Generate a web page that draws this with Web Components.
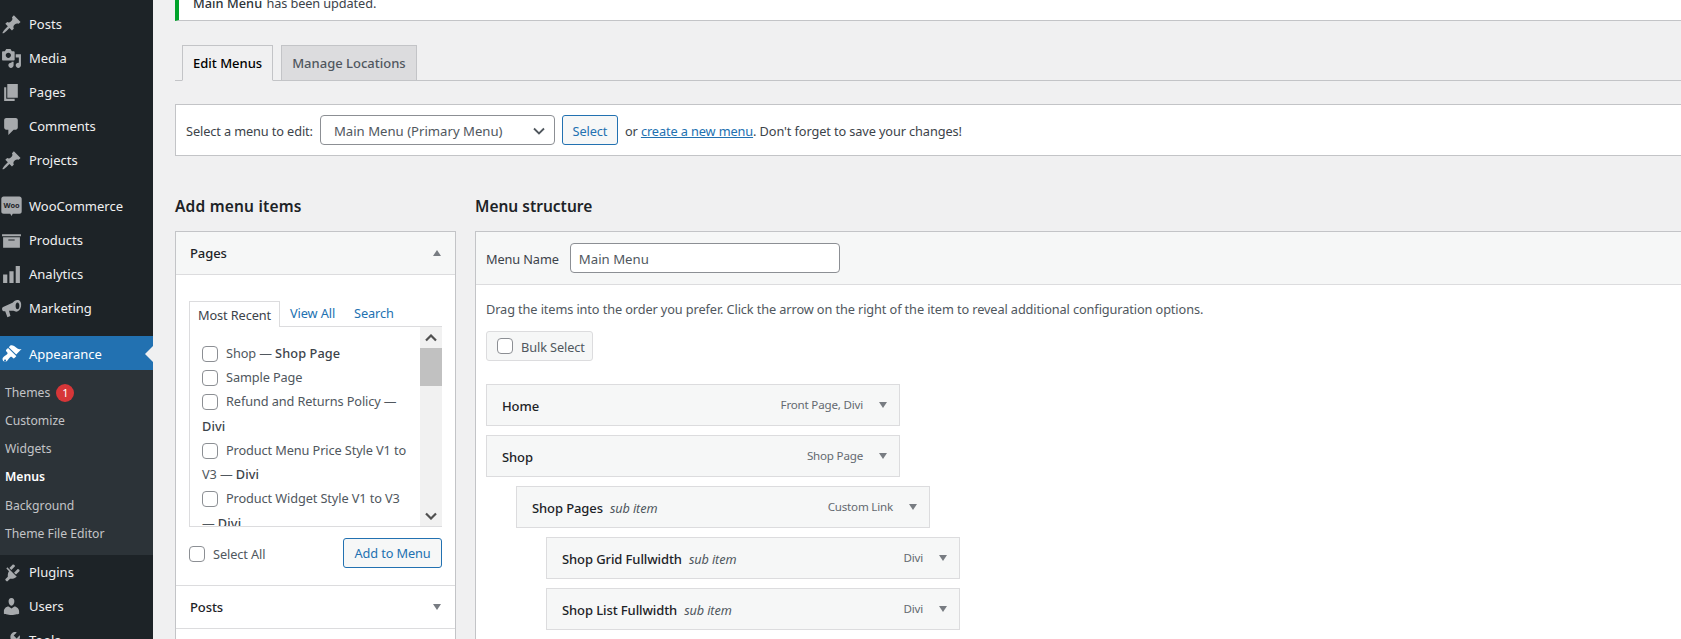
<!DOCTYPE html>
<html lang="en">
<head>
<meta charset="utf-8">
<title>Menus</title>
<style>
    html, body { margin: 0; height: 639px; overflow: hidden; background: #f0f0f1; }
    body { display: flex; font: 13px/20px "Noto Sans", "Open Sans", sans-serif; color: #3c434a; }
    strong { font-weight: 500; color: #2c3338; }
    wp-notice strong { letter-spacing: .05px; margin-right: 1px; }
    wp-check-item strong { color: #3c434a; letter-spacing: .1px; }
</style>
</head>
<body>

<wp-sidebar>
    <wp-nav-item icon="post" style="margin-top:7px">Posts</wp-nav-item>
    <wp-nav-item icon="media">Media</wp-nav-item>
    <wp-nav-item icon="page">Pages</wp-nav-item>
    <wp-nav-item icon="comments">Comments</wp-nav-item>
    <wp-nav-item icon="post">Projects</wp-nav-item>
    <wp-nav-item icon="woo" style="margin-top:12px">WooCommerce</wp-nav-item>
    <wp-nav-item icon="archive">Products</wp-nav-item>
    <wp-nav-item icon="chart">Analytics</wp-nav-item>
    <wp-nav-item icon="megaphone">Marketing</wp-nav-item>
    <wp-nav-item icon="appearance" current style="margin-top:11px">Appearance</wp-nav-item>
    <wp-subnav>
        <wp-subnav-item>Themes <wp-badge>1</wp-badge></wp-subnav-item>
        <wp-subnav-item>Customize</wp-subnav-item>
        <wp-subnav-item>Widgets</wp-subnav-item>
        <wp-subnav-item current>Menus</wp-subnav-item>
        <wp-subnav-item>Background</wp-subnav-item>
        <wp-subnav-item>Theme File Editor</wp-subnav-item>
    </wp-subnav>
    <wp-nav-item icon="plugins">Plugins</wp-nav-item>
    <wp-nav-item icon="users">Users</wp-nav-item>
    <wp-nav-item icon="tools">Tools</wp-nav-item>
</wp-sidebar>

<wp-main>
    <wp-notice><strong>Main Menu</strong> has been updated.</wp-notice>
    <wp-tabs>
        <wp-tab active>Edit Menus</wp-tab>
        <wp-tab>Manage Locations</wp-tab>
    </wp-tabs>
    <wp-manage-bar></wp-manage-bar>

    <wp-columns>
        <wp-add-items slot="left">
            <wp-check-item>Shop — <strong>Shop Page</strong></wp-check-item>
            <wp-check-item>Sample Page</wp-check-item>
            <wp-check-item>Refund and Returns Policy —<br><strong>Divi</strong></wp-check-item>
            <wp-check-item>Product Menu Price Style V1 to<br>V3 — <strong>Divi</strong></wp-check-item>
            <wp-check-item>Product Widget Style V1 to V3<br>— <strong>Divi</strong></wp-check-item>
        </wp-add-items>

        <wp-structure slot="right">
            <wp-menu-row type="Front Page, Divi">Home</wp-menu-row>
            <wp-menu-row type="Shop Page">Shop</wp-menu-row>
            <wp-menu-row type="Custom Link" depth="1" sub>Shop Pages</wp-menu-row>
            <wp-menu-row type="Divi" depth="2" sub>Shop Grid Fullwidth</wp-menu-row>
            <wp-menu-row type="Divi" depth="2" sub>Shop List Fullwidth</wp-menu-row>
        </wp-structure>
    </wp-columns>
</wp-main>

<script>
    const ICONS = {
        post: 'M10.44 3.02l1.82-1.82 6.36 6.35-1.83 1.82c-1.05-.68-2.48-.57-3.41.36l-.75.75c-.92.93-1.04 2.35-.35 3.41l-1.83 1.82-2.41-2.41-2.8 2.79c-.42.42-3.38 2.71-3.8 2.29s1.86-3.39 2.28-3.81l2.79-2.79L4.1 9.36l1.83-1.82c1.05.69 2.48.57 3.4-.36l.75-.75c.93-.92 1.05-2.35.36-3.41z',
        media: 'M13 11V4c0-.55-.45-1-1-1h-1.67L9 1H5L3.67 3H2c-.55 0-1 .45-1 1v7c0 .55.45 1 1 1h10c.55 0 1-.45 1-1zM7 4.5c1.38 0 2.5 1.12 2.5 2.5S8.38 9.5 7 9.5 4.5 8.38 4.5 7 5.62 4.5 7 4.5zM14 6h5v10.5c0 1.38-1.12 2.5-2.5 2.5S14 17.88 14 16.5s1.12-2.5 2.5-2.5c.17 0 .34.02.5.05V9h-3V6zm-4 8.05V13h2v3.5c0 1.38-1.12 2.5-2.5 2.5S7 17.88 7 16.5 8.12 14 9.5 14c.17 0 .34.02.5.05z',
        page: 'M6 15V2h10v13H6zm-1 1h8v2H3V5h2v11z',
        comments: 'M5 2h9c1.1 0 2 .9 2 2v7c0 1.1-.9 2-2 2h-2l-5 5v-5H5c-1.1 0-2-.9-2-2V4c0-1.1.9-2 2-2z',
        archive: 'M19 4v2H1V4h18zM2 7h16v10H2V7zm11 3V9H7v1h6z',
        chart: 'M18 18V2h-4v16h4zm-6 0V7H8v11h4zm-6 0v-8H2v8h4z',
        megaphone: 'M2 8.5L11 4.6C12.4 2.6 14.9 1.4 16.6 2c2 .6 3 3.1 2.5 6-.5 2.9-2.6 5-4.6 5l-2.6-.8-4.3-.1 1.4 5-2.9 1.3L4 12.5H2.6C1.6 12.5 1 11.5 1 10.5S1.5 8.5 2 8.5zM15.7 4.4c-1 0-1.8 1.4-1.8 3.2s.8 3.2 1.8 3.2 1.8-1.4 1.8-3.2-.8-3.2-1.8-3.2z',
        appearance: 'M14.48 11.06L7.41 3.99l1.5-1.5c.5-.56 2.3-.47 3.51.32 1.21.8 1.43 1.28 2.91 2.1 1.18.64 2.45 1.26 4.23.91zm-.71.71L6.7 4.7 4.93 6.47c-.39.39-.39 1.02 0 1.41l1.06 1.06c.39.39.39 1.03 0 1.42-.6.6-1.43 1.27-2.21 1.9-.64.51-1.22.97-1.6 1.35-.97.97-.97 2.54 0 3.51.97.97 2.54.97 3.51 0 .38-.38.84-.96 1.35-1.6.63-.78 1.3-1.61 1.9-2.21.39-.39 1.03-.39 1.42 0l1.06 1.06c.39.39 1.02.39 1.41 0l1.77-1.77zm-9.19 5.66c-.39.39-1.02.39-1.41 0-.39-.39-.39-1.03 0-1.42.39-.39 1.02-.39 1.41 0 .39.39.39 1.03 0 1.42z',
        plugins: 'M13.11 4.36L9.87 7.6 8 5.73l3.24-3.24c.35-.34 1.05-.2 1.56.32.52.51.66 1.21.31 1.55zm4.41 4.41l-3.24 3.24-1.88-1.88 3.24-3.24c.35-.34 1.05-.2 1.56.32.52.51.66 1.21.32 1.56zM5.1 6.13l.91-1.12 9.01 9.01-1.19.84c-.71.71-2.63 1.16-3.67 1.16H8.64l-2.19 2.18c-.39.39-1.02.39-1.41 0l-.71-.71c-.39-.39-.39-1.02 0-1.41l2.15-2.15v-1.53c0-1.03.45-2.95 1.16-3.67z',
        users: 'M10 9.25c-2.27 0-2.73-3.44-2.73-3.44C7 4.02 7.82 2 9.97 2c2.16 0 2.98 2.02 2.71 3.81 0 0-.41 3.44-2.68 3.44zm0 2.57L12.72 10c2.39 0 4.52 2.33 4.52 4.53v2.49s-3.65 1.13-7.24 1.13c-3.65 0-7.24-1.13-7.24-1.13v-2.49c0-2.25 1.94-4.48 4.47-4.48z',
        tools: 'M16.68 9.77c-1.34 1.34-3.3 1.67-4.95.99l-5.41 6.52c-.99.99-2.59.99-3.57 0-.99-.98-.99-2.58 0-3.57l6.52-5.42c-.68-1.65-.35-3.61.99-4.95 1.28-1.28 3.12-1.62 4.72-1.06l-2.89 2.89 2.82 2.82 2.89-2.89c.56 1.6.22 3.44-1.06 4.72zM3.81 16.21c.4.39 1.03.39 1.42 0 .4-.4.4-1.03 0-1.43-.39-.39-1.02-.39-1.42 0-.39.4-.39 1.03 0 1.43z'
    };

    // every element is the same thing: a style, some markup, an open shadow root
    function define(name, css, html) {
        customElements.define(
            name,
            class extends HTMLElement {
                connectedCallback() {
                    if (this.shadowRoot) return;
                    const markup = typeof html === 'function' ? html(this) : html;
                    this.attachShadow({ mode: 'open' }).innerHTML = `<style>${css}</style>${markup}`;
                }
            }
        );
    }

    const triangle = (up) => `<svg width="8" height="6" viewBox="0 0 8 6"><path fill="#787c82" d="${up ? 'M4 0l4 6H0z' : 'M0 0h8L4 6z'}"/></svg>`;

    define('wp-sidebar', `
        :host { display: block; flex: none; width: 153px; height: 639px; overflow: hidden; background: #1d2327; }
    `, `<slot></slot>`);

    define('wp-nav-item', `
        :host { display: flex; align-items: center; height: 34px; position: relative; color: #f0f0f1; font-size: 13px; }
        :host([current]) { background: #2271b1; color: #fff; }
        svg { flex: none; width: 21px; height: 21px; margin: 0 7px 0 1px; fill: #a7aaad; }
        :host([current]) svg { fill: #fff; }
        :host([current]) span.label { padding-top: 2px; }
        .arrow { position: absolute; right: 0; top: 10px; width: 8px; height: 16px; background: #f0f0f1; clip-path: polygon(100% 0, 100% 100%, 0 50%); }
    `, (host) => {
        const name = host.getAttribute('icon');
        const icon = name === 'woo'
            ? `<svg viewBox="0 0 20 20" style="margin-top:1px"><path d="M2.5 .5h15c1.3 0 2.2 1 2.2 2.2v12c0 1.2-.9 2.2-2.2 2.2h-6.3l-1.2 2.1-1.2-2.1H2.5c-1.3 0-2.2-1-2.2-2.2v-12C.3 1.5 1.2.5 2.5.5z"/><text x="10" y="11.5" text-anchor="middle" font-size="7" font-weight="700" fill="#1d2327" font-family="Noto Sans">Woo</text></svg>`
            : `<svg viewBox="0 0 20 20"><path fill-rule="evenodd" d="${ICONS[name]}"/></svg>`;
        return `${icon}<span class="label"><slot></slot></span>${host.hasAttribute('current') ? '<span class="arrow"></span>' : ''}`;
    });

    define('wp-subnav', `
        :host { display: block; background: #2c3338; padding: 8.7px 0 6px; height: 185px; box-sizing: border-box; }
    `, `<slot></slot>`);

    define('wp-subnav-item', `
        :host { display: flex; align-items: center; gap: 3px; height: 28.2px; padding-left: 5px; color: #c3c4c7; font-size: 12.2px; white-space: pre; }
        :host([current]) { color: #fff; font-weight: 600; }
    `, `<slot></slot>`);

    define('wp-badge', `
        :host { display: inline-flex; align-items: center; justify-content: center; width: 18px; height: 18px; border-radius: 50%; background: #d63638; color: #fff; font-size: 11px; }
    `, `<slot></slot>`);

    define('wp-main', `
        :host { display: block; flex: 1; min-width: 0; padding-left: 22px; font-size: 12.75px; letter-spacing: -.11px; }
    `, `<slot></slot>`);

    define('wp-notice', `
        :host { display: flex; align-items: flex-end; height: 21px; box-sizing: border-box; overflow: hidden; padding: 0 0 7px 14px; background: #fff; border-left: 4px solid #00a32a; border-bottom: 1px solid #c3c4c7; white-space: nowrap; }
    `, `<span><slot></slot></span>`);

    define('wp-tabs', `
        :host { display: flex; gap: 8px; margin-top: 24px; height: 36px; box-sizing: border-box; padding-left: 7px; border-bottom: 1px solid #c3c4c7; }
    `, `<slot></slot>`);

    define('wp-tab', `
        :host { display: flex; align-items: center; height: 36px; box-sizing: border-box; padding: 0 10px; border: 1px solid #c3c4c7; background: #dcdcde; color: #50575e; font-weight: 500; font-size: 13px; letter-spacing: 0; }
        :host([active]) { background: #f0f0f1; color: #000; border-bottom-color: #f0f0f1; }
    `, `<slot></slot>`);

    define('wp-manage-bar', `
        :host { display: flex; align-items: center; margin-top: 23px; height: 52px; box-sizing: border-box; padding-left: 10px; background: #fff; border: 1px solid #c3c4c7; border-right: 0; white-space: pre; }
        .text { padding-top: 2px; }
        .select { display: flex; align-items: center; justify-content: space-between; box-sizing: border-box; width: 235px; height: 30px; margin-left: 7px; padding: 1px 9px 0 13px; border: 1px solid #8c8f94; border-radius: 4px; color: #50575e; font-size: 13.15px; letter-spacing: 0; }
        .button { display: flex; align-items: center; box-sizing: border-box; height: 30px; width: 56px; justify-content: center; margin: 0 7px; padding-top: 1px; border: 1px solid #2271b1; border-radius: 3px; background: #f6f7f7; color: #2271b1; }
        a { color: #2271b1; text-decoration: underline; }
    `, `<span class="text">Select a menu to edit:</span>
        <span class="select">Main Menu (Primary Menu)<svg width="12" height="8" viewBox="0 0 12 8"><path d="M1 1.5l5 5 5-5" fill="none" stroke="#50575e" stroke-width="1.8"/></svg></span>
        <span class="button">Select</span>
        <span class="text">or <a>create a new menu</a>. Don't forget to save your changes!</span>`);

    define('wp-columns', `
        :host { display: grid; grid-template-columns: 281px 1fr; column-gap: 19px; margin-top: 35px; }
    `, `<slot name="left"></slot><slot name="right"></slot>`);

    define('wp-add-items', `
        :host { display: block; }
        h2 { margin: 0 0 10px; font-size: 15.5px; line-height: 30px; font-weight: 600; letter-spacing: .2px; color: #1d2327; white-space: nowrap; }
        .panel { background: #fff; border: 1px solid #c3c4c7; border-bottom: 0; }
        .head { display: flex; align-items: center; justify-content: space-between; height: 42px; padding: 0 14px; border-bottom: 1px solid #dcdcde; color: #1d2327; font-weight: 500; font-size: 13px; letter-spacing: -.1px; }
        .head.open { background: #f6f7f7; }
        .body { padding: 25px 13px 17px; border-bottom: 1px solid #dcdcde; }
        .tabs { display: flex; align-items: center; height: 26px; white-space: nowrap; }
        .tabs b { display: flex; align-items: center; height: 26px; box-sizing: border-box; padding: 0 8px; font-weight: 400; border: 1px solid #dcdcde; border-bottom: 0; color: #3c434a; position: relative; top: 1px; background: #fff; }
        .tabs a { color: #2271b1; margin-left: 10px; }
        .tabs a + a { margin-left: 19px; }
        .box { display: flex; height: 199px; border: 1px solid #dcdcde; border-right: 0; }
        .list { flex: 1; min-width: 0; overflow: hidden; padding: 13.7px 0 0 12px; }
        .bar { flex: none; width: 22px; display: flex; flex-direction: column; background: #f1f1f1; }
        .bar i { flex: none; height: 21px; display: flex; align-items: center; justify-content: center; }
        .bar u { flex: none; height: 38px; background: #c1c1c1; }
        .bar s { flex: 1; }
        .foot { display: flex; align-items: center; justify-content: space-between; margin-top: 11px; }
        .all { display: flex; align-items: center; gap: 8px; color: #50575e; position: relative; top: 1px; }
        .cb { box-sizing: border-box; width: 16px; height: 16px; border: 1px solid #8c8f94; border-radius: 4px; background: #fff; }
        .add { display: flex; align-items: center; justify-content: center; box-sizing: border-box; width: 99px; height: 30px; border: 1px solid #2271b1; border-radius: 3px; background: #f6f7f7; color: #2271b1; }
    `, `<h2>Add menu items</h2>
        <div class="panel">
            <div class="head open">Pages ${triangle(true)}</div>
            <div class="body">
                <div class="tabs"><b>Most Recent</b><a>View All</a><a>Search</a></div>
                <div class="box">
                    <div class="list"><slot></slot></div>
                    <div class="bar">
                        <i><svg width="12" height="8" viewBox="0 0 12 8"><path d="M1 6.5l5-5 5 5" fill="none" stroke="#505050" stroke-width="2.2"/></svg></i>
                        <u></u><s></s>
                        <i><svg width="12" height="8" viewBox="0 0 12 8"><path d="M1 1.5l5 5 5-5" fill="none" stroke="#505050" stroke-width="2.2"/></svg></i>
                    </div>
                </div>
                <div class="foot">
                    <span class="all"><span class="cb"></span>Select All</span>
                    <span class="add">Add to Menu</span>
                </div>
            </div>
            <div class="head">Posts ${triangle(false)}</div>
            <div class="head"></div>
        </div>`);

    define('wp-check-item', `
        :host { display: block; line-height: 24.3px; color: #50575e; white-space: nowrap; }
        span { box-sizing: border-box; display: inline-block; vertical-align: -4px; width: 16px; height: 16px; margin-right: 8px; border: 1px solid #8c8f94; border-radius: 4px; background: #fff; }
    `, `<span></span><slot></slot>`);

    define('wp-structure', `
        :host { display: block; }
        h2 { margin: 0 0 10px; font-size: 15.5px; line-height: 30px; font-weight: 600; letter-spacing: 0; color: #1d2327; white-space: nowrap; }
        .panel { background: #fff; border: 1px solid #c3c4c7; border-right: 0; height: 420px; }
        .head { display: flex; align-items: center; height: 52px; padding-left: 10px; background: #f6f7f7; border-bottom: 1px solid #dcdcde; }
        .head > span:first-child { padding-top: 2px; }
        .name { box-sizing: border-box; width: 270px; height: 30px; margin-left: 11px; padding: 1px 8px 0; display: flex; align-items: center; background: #fff; border: 1px solid #8c8f94; border-radius: 4px; color: #50575e; font-size: 13.2px; letter-spacing: 0; }
        .body { padding: 14px 0 0 10px; }
        p { margin: 0; white-space: nowrap; color: #50575e; }
        .bulk { display: inline-flex; align-items: center; gap: 8px; box-sizing: border-box; width: 107px; height: 30px; margin: 12px 0 23px; padding-left: 10px; background: #f6f7f7; border: 1px solid #dcdcde; border-radius: 3px; color: #50575e; }
        .bulk b { font-weight: 400; padding-top: 2px; }
        .cb { box-sizing: border-box; width: 16px; height: 16px; border: 1px solid #8c8f94; border-radius: 4px; background: #fff; }
    `, `<h2>Menu structure</h2>
        <div class="panel">
            <div class="head"><span>Menu Name</span><span class="name">Main Menu</span></div>
            <div class="body">
                <p>Drag the items into the order you prefer. Click the arrow on the right of the item to reveal additional configuration options.</p>
                <div class="bulk"><span class="cb"></span><b>Bulk Select</b></div>
                <slot></slot>
            </div>
        </div>`);

    define('wp-menu-row', `
        :host { display: flex; align-items: center; box-sizing: border-box; width: 414px; height: 42px; margin: 0 0 9px calc(var(--depth, 0) * 30px); padding: 0 12px 0 15px; background: #f6f7f7; border: 1px solid #dcdcde; white-space: nowrap; }
        b { padding-top: 2px; font-weight: 500; font-size: 13px; letter-spacing: -.1px; color: #1d2327; }
        em { padding-top: 2px; margin-left: 7px; color: #50575e; font-size: 12.7px; }
        span { margin-left: auto; color: #646970; font-size: 11.6px; letter-spacing: -.2px; }
        svg { margin-left: 16px; }
    `, (host) => {
        host.style.setProperty('--depth', host.getAttribute('depth') || 0);
        const sub = host.hasAttribute('sub') ? '<em>sub item</em>' : '';
        return `<b><slot></slot></b>${sub}<span>${host.getAttribute('type')}</span>${triangle(false)}`;
    });
</script>
</body>
</html>
